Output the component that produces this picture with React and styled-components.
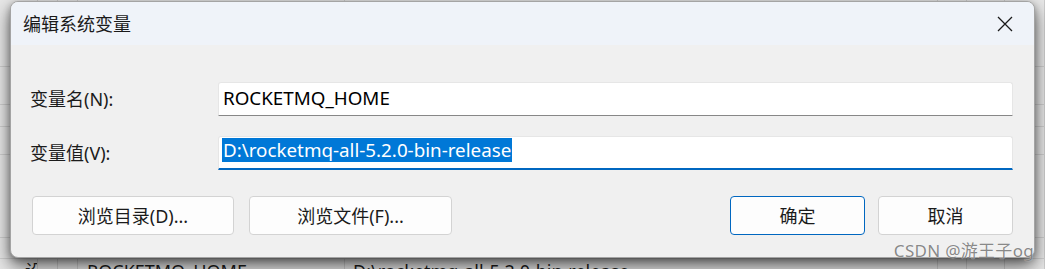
import React from "react";
import styled, { createGlobalStyle, css } from "styled-components";

const GlobalStyle = createGlobalStyle`
  html, body { margin: 0; padding: 0; }
  body {
    width: 1045px;
    height: 269px;
    overflow: hidden;
    font-family: "Noto Sans", "Noto Sans CJK SC", sans-serif;
    color: #1b1b1b;
  }
`;

const Screen = styled.div`
  position: relative;
  width: 1045px;
  height: 269px;
  overflow: hidden;
  background: #e7e7e7;
`;

/* ---------- parent window behind the dialog ---------- */
const ParentTable = styled.div`
  display: flex;
  flex-direction: column;
  width: 100%;
  height: 100%;
`;

const ParentRow = styled.div`
  display: grid;
  grid-template-columns: 38px 20px 20px 267px 593px 29px 38px 1fr;
  height: ${(p) => p.$h}px;
  border-bottom: 1px solid #cfcfcf;
  flex: none;
`;

const ParentCell = styled.div`
  border-right: 1px solid #cdcdcd;
  font-size: 18px;
  line-height: 22px;
  padding: 1px 0 0 ${(p) => p.$pad || 0}px;
  white-space: nowrap;
  overflow: hidden;
  color: #1e1e1e;
`;

/* ---------- dialog ---------- */
const Dialog = styled.div`
  position: absolute;
  top: 1px;
  left: 10px;
  width: 1025px;
  height: 257px;
  box-sizing: border-box;
  display: flex;
  flex-direction: column;
  background: #f0f0f0;
  border: 1px solid #a4a4a4;
  border-radius: 8px;
  overflow: hidden;
  box-shadow: 0 8px 18px rgba(0, 0, 0, 0.6), 0 2px 6px rgba(0, 0, 0, 0.25);
`;

const TitleBar = styled.div`
  height: 43px;
  flex: none;
  display: flex;
  align-items: center;
  justify-content: space-between;
  padding: 0 0 0 12px;
  background: #eff3f9;
`;

const Title = styled.span`
  font-size: 18px;
  color: #1a1a1a;
  margin-top: -1px;
`;

const CloseButton = styled.div`
  width: 46px;
  height: 43px;
  margin-right: 6px;
  display: flex;
  align-items: center;
  justify-content: center;
  color: #1a1a1a;
`;

const Body = styled.div`
  flex: 1;
  display: flex;
  flex-direction: column;
  padding: 37px 21px 21px 19px;
`;

const FieldRow = styled.div`
  display: grid;
  grid-template-columns: 188px 1fr;
  align-items: center;
  margin-bottom: ${(p) => p.$gap || 0}px;
`;

const Label = styled.label`
  font-size: 18px;
  color: #1b1b1b;
  margin-top: -2px;
`;

const TextBox = styled.div`
  height: 34px;
  box-sizing: border-box;
  background: #ffffff;
  border: 1px solid #e6e6e6;
  border-radius: 3px 3px 0 0;
  padding: 1px 0 0 3px;
  display: flex;
  align-items: center;
  font-size: 18.8px;
  white-space: nowrap;
  ${(p) =>
    p.$focused
      ? css`
          border-bottom: 2px solid #0067c0;
          padding-top: 0;
          align-items: flex-start;
        `
      : css`
          border-bottom: 1px solid #878787;
        `}
`;

const PlainText = styled.span`
  color: #000;
  margin-top: -4px;
  padding-left: 1px;
`;

const Selection = styled.span`
  background: #0078d7;
  color: #ffffff;
  height: 24px;
  line-height: 24px;
  margin-top: 1px;
  padding: 0 1px;
`;

const ButtonRow = styled.div`
  display: flex;
  justify-content: space-between;
  margin-top: 26px;
  padding-left: 2px;
`;

const ButtonGroup = styled.div`
  display: flex;
  gap: ${(p) => p.$gap}px;
`;

const Button = styled.button`
  width: ${(p) => p.$w}px;
  height: 39px;
  box-sizing: border-box;
  background: #fdfdfd;
  border: 1px solid ${(p) => (p.$primary ? "#0067c0" : "#d3d3d3")};
  border-radius: 4px;
  font-family: "Noto Sans", "Noto Sans CJK SC", sans-serif;
  font-size: 18px;
  color: #1b1b1b;
  padding: 0 0 2px;
  cursor: default;
`;

const Watermark = styled.div`
  position: absolute;
  right: 11px;
  bottom: 8px;
  font-size: 17px;
  line-height: 20px;
  color: rgba(105, 105, 105, 0.8);
  text-shadow: 0 0 1px rgba(255, 255, 255, 0.9);
  white-space: nowrap;
  letter-spacing: 0.3px;
`;

const rows = [66, 37, 21, 27, 82, 20];

export default function App() {
  return (
    <>
      <GlobalStyle />
      <Screen>
        <ParentTable>
          {rows.map((h, i) => (
            <ParentRow key={i} $h={h}>
              {Array.from({ length: 8 }).map((_, j) => (
                <ParentCell key={j} />
              ))}
            </ParentRow>
          ))}
          <ParentRow $h={40}>
            <ParentCell $pad={25}>设</ParentCell>
            <ParentCell />
            <ParentCell />
            <ParentCell $pad={9}>ROCKETMQ_HOME</ParentCell>
            <ParentCell $pad={8}>D:\rocketmq-all-5.2.0-bin-release</ParentCell>
            <ParentCell />
            <ParentCell />
            <ParentCell />
          </ParentRow>
        </ParentTable>

        <Dialog role="dialog" aria-label="编辑系统变量">
          <TitleBar>
            <Title>编辑系统变量</Title>
            <CloseButton>
              <svg width="16" height="16" viewBox="0 0 16 16">
                <path
                  d="M1 1 L15 15 M15 1 L1 15"
                  stroke="currentColor"
                  strokeWidth="1.3"
                  fill="none"
                />
              </svg>
            </CloseButton>
          </TitleBar>
          <Body>
            <FieldRow $gap={20}>
              <Label>变量名(N):</Label>
              <TextBox>
                <PlainText>ROCKETMQ_HOME</PlainText>
              </TextBox>
            </FieldRow>
            <FieldRow>
              <Label>变量值(V):</Label>
              <TextBox $focused>
                <Selection>D:\rocketmq-all-5.2.0-bin-release</Selection>
              </TextBox>
            </FieldRow>
            <ButtonRow>
              <ButtonGroup $gap={15}>
                <Button $w={202}>浏览目录(D)...</Button>
                <Button $w={203}>浏览文件(F)...</Button>
              </ButtonGroup>
              <ButtonGroup $gap={13}>
                <Button $w={135} $primary>
                  确定
                </Button>
                <Button $w={135}>取消</Button>
              </ButtonGroup>
            </ButtonRow>
          </Body>
        </Dialog>
        <Watermark>CSDN @游王子og</Watermark>
      </Screen>
    </>
  );
}
